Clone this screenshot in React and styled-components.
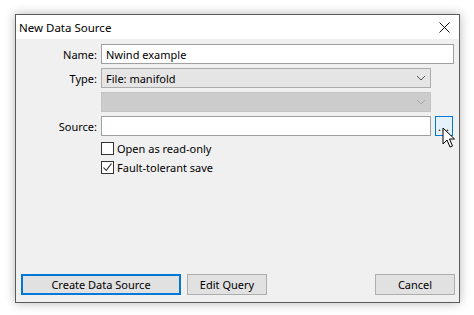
import React from 'react';
import styled, { createGlobalStyle } from 'styled-components';

const GlobalStyle = createGlobalStyle`
  html, body {
    margin: 0;
    padding: 0;
    background: #ffffff;
  }
  body {
    font-family: "Noto Sans", "Open Sans", "Liberation Sans", sans-serif;
    font-size: 11px;
    color: #000;
  }
`;

const Page = styled.div`
  width: 474px;
  height: 315px;
  padding: 14px 15px 0;
  box-sizing: border-box;
`;

const Dialog = styled.div`
  position: relative;
  width: 445px;
  height: 289px;
  box-sizing: border-box;
  border: 1px solid #5a5a5a;
  background: #f0f0f0;
  display: flex;
  flex-direction: column;
  box-shadow: 0 0 10px rgba(0, 0, 0, 0.28);
`;

const TitleBar = styled.div`
  height: 24px;
  background: #ffffff;
  display: flex;
  align-items: center;
  justify-content: space-between;
  padding: 0 9px 0 3px;
  font-size: 11.5px;
`;

const Body = styled.div`
  flex: 1;
  display: flex;
  flex-direction: column;
  padding: 5px 4px 7px 5px;
`;

const FormGrid = styled.div`
  display: grid;
  grid-template-columns: 76px 330px 18px;
  column-gap: 4px;
  row-gap: 4px;
  grid-auto-rows: 20px;
  align-items: center;
`;

const Label = styled.div`
  text-align: right;
  grid-column: 1;
`;

const TextBox = styled.div`
  grid-column: ${p => (p.$wide ? '2 / 4' : '2')};
  height: 20px;
  box-sizing: border-box;
  border: 1px solid #a0a0a0;
  background: #fff;
  padding: 0 4px;
  display: flex;
  align-items: center;
  margin-right: ${p => (p.$wide ? '-1px' : '0')};
`;

const Select = styled.div`
  grid-column: 2;
  height: 20px;
  box-sizing: border-box;
  border: 1px solid ${p => (p.$disabled ? '#c4c4c4' : '#acacac')};
  background: ${p => (p.$disabled ? '#cccccc' : '#e5e5e5')};
  padding: 0 4px;
  display: flex;
  align-items: center;
  justify-content: space-between;
`;

const BrowseButton = styled.div`
  grid-column: 3;
  height: 20px;
  box-sizing: border-box;
  border: 1px solid #0078d7;
  background: #e5f1fb;
  display: flex;
  align-items: flex-end;
  justify-content: center;
  padding-bottom: 3px;
  font-size: 11px;
  line-height: 1;
  letter-spacing: 1px;
`;

const Checks = styled.div`
  display: flex;
  flex-direction: column;
  gap: 6px;
  padding-left: 80px;
  margin-top: 6px;
`;

const CheckRow = styled.label`
  display: flex;
  align-items: center;
  gap: 3px;
  height: 13px;
`;

const Box = styled.span`
  width: 13px;
  height: 13px;
  box-sizing: border-box;
  border: 1px solid #333;
  background: #fff;
  display: flex;
  align-items: center;
  justify-content: center;
`;

const Footer = styled.div`
  margin-top: auto;
  display: flex;
  gap: 6px;
`;

const Button = styled.div`
  width: ${p => p.$w}px;
  height: 21px;
  box-sizing: border-box;
  border: 1px solid ${p => (p.$default ? '#0078d7' : '#adadad')};
  box-shadow: ${p => (p.$default ? 'inset 0 0 0 1px #0078d7' : 'none')};
  background: #e1e1e1;
  display: flex;
  align-items: center;
  justify-content: center;
  margin-left: ${p => (p.$push ? 'auto' : '0')};
`;

const Cursor = styled.svg`
  position: absolute;
  left: 426px;
  top: 112px;
`;

const Chevron = ({ color }) => (
  <svg width="10" height="6" viewBox="0 0 10 6">
    <path d="M1 1 L5 5 L9 1" fill="none" stroke={color} strokeWidth="1" />
  </svg>
);

const Check = () => (
  <svg width="11" height="11" viewBox="0 0 11 11">
    <path d="M1.5 5.5 L4.2 8.5 L9.5 1.5" fill="none" stroke="#222" strokeWidth="1.1" />
  </svg>
);

export default function App() {
  return (
    <Page>
      <GlobalStyle />
      <Dialog>
        <TitleBar>
          <span>New Data Source</span>
          <svg width="11" height="11" viewBox="0 0 11 11">
            <path d="M0.5 0.5 L10.5 10.5 M10.5 0.5 L0.5 10.5" stroke="#111" strokeWidth="1" />
          </svg>
        </TitleBar>
        <Body>
          <FormGrid>
            <Label>Name:</Label>
            <TextBox $wide>Nwind example</TextBox>
            <Label>Type:</Label>
            <Select>
              <span>File: manifold</span>
              <Chevron color="#555" />
            </Select>
            <Label />
            <Select $disabled>
              <span />
              <Chevron color="#a8a8a8" />
            </Select>
            <Label>Source:</Label>
            <TextBox />
            <BrowseButton>...</BrowseButton>
          </FormGrid>
          <Checks>
            <CheckRow>
              <Box />
              Open as read-only
            </CheckRow>
            <CheckRow>
              <Box>
                <Check />
              </Box>
              Fault-tolerant save
            </CheckRow>
          </Checks>
          <Footer>
            <Button $w={160} $default>Create Data Source</Button>
            <Button $w={80}>Edit Query</Button>
            <Button $w={80} $push>Cancel</Button>
          </Footer>
        </Body>
        <Cursor width="14" height="22" viewBox="0 0 14 22">
          <path d="M1 1 L1 17 L5 13 L8 20 L10.5 19 L7.5 12 L12.5 12 Z" fill="#fff" stroke="#000" strokeWidth="1" strokeLinejoin="miter" />
        </Cursor>
      </Dialog>
    </Page>
  );
}
